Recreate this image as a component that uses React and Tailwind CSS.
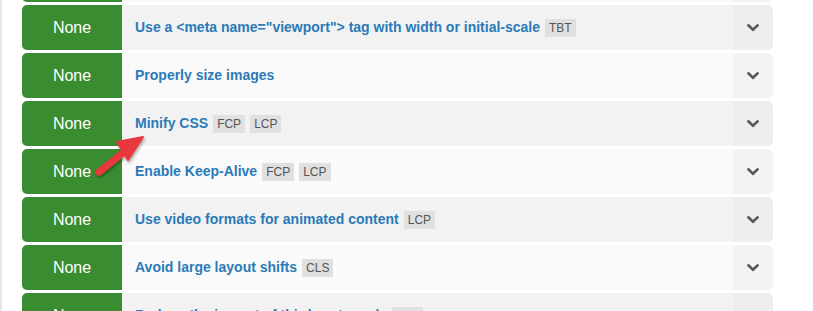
import React from "react";

const audits = [
  { title: "Serve static assets with an efficient cache policy", tags: [] },
  { title: 'Use a <meta name="viewport"> tag with width or initial-scale', tags: ["TBT"] },
  { title: "Properly size images", tags: [] },
  { title: "Minify CSS", tags: ["FCP", "LCP"] },
  { title: "Enable Keep-Alive", tags: ["FCP", "LCP"] },
  { title: "Use video formats for animated content", tags: ["LCP"] },
  { title: "Avoid large layout shifts", tags: ["CLS"] },
  { title: "Reduce the impact of third-party code", tags: ["TBT"] },
];

const Chevron = () => (
  <svg width="12" height="8" viewBox="0 0 12 8" fill="none">
    <path
      d="M1.5 1.5L6 5.8l4.5-4.3"
      stroke="#555555"
      strokeWidth="2.6"
      strokeLinecap="square"
    />
  </svg>
);

const AuditRow = ({ audit, odd }) => (
  <div
    className={`flex h-[45px] rounded-[5px] overflow-hidden ${
      odd ? "bg-[#f2f2f2]" : "bg-[#fafafa]"
    }`}
  >
    {/* grade */}
    <div className="w-[100px] shrink-0 bg-[#3a8c30] flex items-center justify-center text-white text-[16px]">
      None
    </div>
    {/* title */}
    <div className="flex-1 flex items-center pl-[13px] gap-[4px] min-w-0">
      <span className="text-[14px] font-bold text-[#2b7ab8] whitespace-nowrap">
        {audit.title}
      </span>
      {audit.tags.map((t) => (
        <span
          key={t}
          className="bg-[#e0e0e0] text-[#555555] text-[12px] leading-[18px] px-[4px] ml-[1px]"
        >
          {t}
        </span>
      ))}
    </div>
    {/* toggle */}
    <div
      className={`w-[40px] shrink-0 flex items-center justify-center ${
        odd ? "bg-[#ededed]" : "bg-[#f3f3f3]"
      }`}
    >
      <Chevron />
    </div>
  </div>
);

export default function App() {
  return (
    <div
      className="relative w-[813px] h-[311px] overflow-hidden bg-white flex"
      style={{ fontFamily: '"Liberation Sans", Arial, sans-serif' }}
    >
      <div className="w-[2px] shrink-0 bg-[#e6e6e6]" />
      <div className="flex-1 pl-[20px] pr-[40px]">
        <div className="flex flex-col gap-[3px] -mt-[43px]">
          {audits.map((a, i) => (
            <AuditRow key={i} audit={a} odd={i % 2 === 1} />
          ))}
        </div>
      </div>

      {/* annotation arrow */}
      <svg
        className="absolute left-0 top-0 pointer-events-none"
        width="813"
        height="311"
      >
        <defs>
          <filter id="sh" x="-50%" y="-50%" width="200%" height="200%">
            <feDropShadow dx="1" dy="2" stdDeviation="1.5" floodColor="#000" floodOpacity="0.35" />
          </filter>
        </defs>
        <g filter="url(#sh)" fill="#e8383d" stroke="#e8383d">
          <line x1="99" y1="172" x2="124" y2="152" strokeWidth="7" strokeLinecap="round" />
          <polygon points="143,137 117,142 128,160" strokeWidth="2" strokeLinejoin="round" />
        </g>
      </svg>
    </div>
  );
}
